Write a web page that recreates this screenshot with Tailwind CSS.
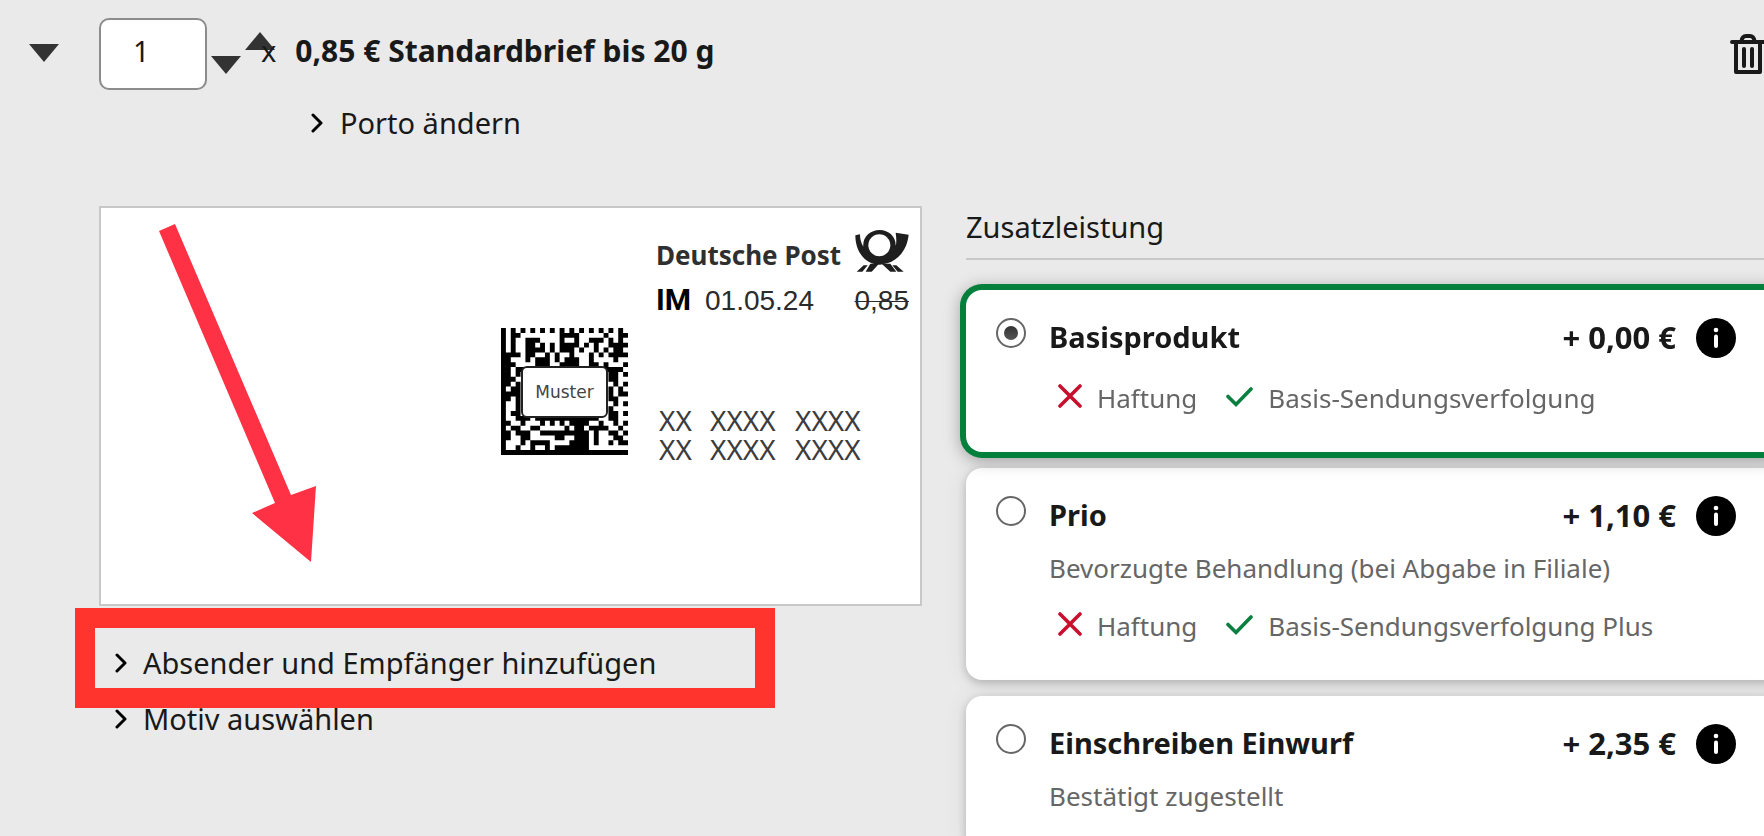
<!DOCTYPE html>
<html lang="de">
<head>
<meta charset="utf-8">
<meta name="viewport" content="width=device-width, initial-scale=1">
<title>Standardbrief – Zusatzleistung</title>
<script src="https://cdn.jsdelivr.net/npm/@tailwindcss/browser@4"></script>
</head>
<body class="min-h-screen overflow-hidden bg-[#eaeaea] font-['Noto_Sans','Open_Sans',sans-serif] text-[29px] text-[#191919]">
<svg class="hidden" aria-hidden="true">
  <symbol id="chevron" viewBox="0 0 12 20"><path d="M2 2l8 8-8 8" fill="none" stroke="#000" stroke-width="3" stroke-linecap="round" stroke-linejoin="round"/></symbol>
  <symbol id="tri-down" viewBox="0 0 30 18"><path d="M0 0h30L15 18z" fill="#333"/></symbol>
  <symbol id="tri-up" viewBox="0 0 30 18"><path d="M0 18h30L15 0z" fill="#333"/></symbol>
  <symbol id="cross" viewBox="0 0 24 24"><path d="M2 2l20 20m0-20l-20 20" fill="none" stroke="#c8102e" stroke-width="3.600" stroke-linecap="round"/></symbol>
  <symbol id="check" viewBox="0 0 27 24"><path d="M2 12.500l8 8L25 5" fill="none" stroke="#0b7f40" stroke-width="3.600" stroke-linecap="round" stroke-linejoin="miter"/></symbol>
  <symbol id="info" viewBox="0 0 40 40"><circle cx="20" cy="20" r="20" fill="#000"/><circle cx="20" cy="12" r="2.300" fill="#fff"/><path d="M20 18.500v9.500" stroke="#fff" stroke-width="4" stroke-linecap="round"/></symbol>
</svg>

<main class="-mr-[22px] pt-[18px]">
  <header class="flex items-start pr-5 pl-[29px]">
    <button type="button" aria-label="Position einklappen" class="mt-[26px]"><svg class="h-[18px] w-[30px]"><use href="#tri-down"/></svg></button>
    <input type="text" inputmode="numeric" value="1" aria-label="Anzahl" class="ml-10 h-[72px] w-[108px] rounded-[10px] border-2 border-[#8c8c8c] bg-white pb-2 pl-8">
    <button type="button" aria-label="Anzahl verringern" class="mt-[38px] ml-1"><svg class="h-[18px] w-[30px]"><use href="#tri-down"/></svg></button>
    <button type="button" aria-label="Anzahl erhöhen" class="mt-[14px] ml-1"><svg class="h-[18px] w-[30px]"><use href="#tri-up"/></svg></button>
    <span class="-ml-[14px] leading-[66px]">x</span>
    <h1 class="ml-[19px] text-[30px] leading-[66px] font-bold">0,85 € Standardbrief bis 20 g</h1>
    <button type="button" aria-label="Position löschen" class="mt-4 ml-auto">
      <svg class="h-10 w-9" viewBox="0 0 36 40" fill="none" stroke="#191919" stroke-width="4" stroke-linecap="round" stroke-linejoin="round"><path d="M2 8h32M6 8v30h24V8M11.500 7c.5-3 2-5 4.500-5h4c2.500 0 4 2 4.500 5M14 15v17M22 15v17"/></svg>
    </button>
  </header>
  <div class="mt-[13px] flex pl-[311px]">
    <a href="#porto" class="flex items-center gap-[17px] leading-10"><svg class="h-5 w-3"><use href="#chevron"/></svg>Porto ändern</a>
  </div>

  <div class="mt-[63px] grid grid-cols-[823fr_820fr] gap-11 pl-[99px]">
    <section aria-label="Briefvorschau">
      <div class="relative flex h-[400px] justify-end gap-7 border-2 border-[#c8c8c8] bg-white pr-[11px]">
        <div class="mt-[120px] grid size-[127px] place-items-center">
          <svg class="col-start-1 row-start-1 size-[127px]" viewBox="0 0 26 26" aria-hidden="true"><path id="matrix" fill="#000"/></svg>
          <span class="col-start-1 row-start-1 rounded-md border-2 border-[#222] bg-white px-3 py-[11px] font-['DejaVu_Sans',sans-serif] text-[17px] leading-[26px] text-[#444]">Muster</span>
        </div>
        <div class="w-[253px] pt-[22px]">
          <div class="flex items-start justify-between">
            <span class="pt-[7px] text-[26px] leading-9 font-bold text-[#2f2f2f]">Deutsche Post</span>
            <svg class="h-[42px] w-[54px]" viewBox="0 0 162 126" role="img" aria-label="Posthorn">
              <path fill="#1e1e1e" d="M1 16l14-3c0 14 3 26 10 37C22 22 45 0 74 0c28 0 50 21 48 49 3-12 2-26 0-41l39 6c-4 39-25 73-64 86l-22 4C31 104 1 66 1 16z"/>
              <circle cx="73" cy="46" r="33" fill="#fff"/>
              <path fill="#1e1e1e" d="M26 106h12l-16 19H5zM46 101h26l-22 24H32zM80 101h26l18 24h-18zM112 106h12l22 19h-18z"/>
            </svg>
          </div>
          <div class="mt-1.5 flex items-baseline font-['Liberation_Sans',Arial,sans-serif] text-[28px] leading-[42px] text-[#2b2b2b]">
            <b class="w-[49px] font-['Roboto',sans-serif] text-[30px] text-black">IM</b>
            <span>01.05.24</span>
            <s class="ml-auto decoration-1">0,85</s>
          </div>
          <div class="mt-[84px] flex gap-[17px] pl-[3px] text-[28px] leading-[29px] text-[#3c3c3c]">
            <p class="w-[34px]">XX<br>XX</p>
            <p class="w-[68px]">XXXX<br>XXXX</p>
            <p class="w-[68px]">XXXX<br>XXXX</p>
          </div>
        </div>
        <svg class="pointer-events-none absolute top-[16px] left-[58px] h-[338px] w-[157px]" viewBox="0 0 157 338" aria-hidden="true"><path fill="#ff3144" d="M0 7L16 0l116 271 25-9-5 76-59-49 23-10z"/></svg>
      </div>
      <nav class="relative mt-[29px] flex flex-col items-start pl-4 leading-[56px]" aria-label="Brief gestalten">
        <a href="#adresse" class="flex items-center gap-4"><svg class="h-5 w-3"><use href="#chevron"/></svg>Absender und Empfänger hinzufügen</a>
        <a href="#motiv" class="flex items-center gap-4"><svg class="h-5 w-3"><use href="#chevron"/></svg>Motiv auswählen</a>
        <span class="pointer-events-none absolute -top-[27px] -left-6 h-[100px] w-[700px] border-[20px] border-[#ff342d]" aria-hidden="true"></span>
      </nav>
    </section>

    <fieldset class="min-w-0">
      <legend class="mb-[30px] w-full border-b-2 border-[#c8c8c8] pb-[11px] leading-[41px]">Zusatzleistung</legend>
      <div class="flex flex-col gap-4">
        <label class="block rounded-2xl bg-white pt-7 pr-[50px] pb-[35px] pl-[30px] ring-6 ring-[#047f3c] drop-shadow-[0_3px_8px_rgba(0,0,0,0.3)]">
          <span class="flex items-start">
            <input type="radio" name="service" checked class="size-[30px] shrink-0 appearance-none rounded-full border-2 border-[#666] bg-white p-1.5 before:block before:size-[14px] before:rounded-full checked:before:bg-linear-to-b checked:before:from-[#333] checked:before:to-[#555]">
            <b class="ml-[23px] leading-[38px]">Basisprodukt</b>
            <b class="mr-[20px] ml-auto text-[31px] leading-[38px]">+ 0,00 €</b>
            <button type="button" aria-label="Info zu Basisprodukt"><svg class="size-10"><use href="#info"/></svg></button>
          </span>
          <span class="mt-[21px] flex items-start gap-[15px] pl-[62px] text-[26px] leading-[38px] text-[#666]">
            <svg class="mt-[5px] size-6 shrink-0"><use href="#cross"/></svg><span class="mr-[14px]">Haftung</span>
            <svg class="mt-[5px] h-6 w-[27px] shrink-0"><use href="#check"/></svg><span>Basis-Sendungsverfolgung</span>
          </span>
        </label>
        <label class="block rounded-2xl bg-white pt-7 pr-[50px] pb-[35px] pl-[30px] shadow-[0_3px_8px_rgba(0,0,0,0.2),0_0_24px_rgba(0,0,0,0.08)]">
          <span class="flex items-start">
            <input type="radio" name="service" class="size-[30px] shrink-0 appearance-none rounded-full border-2 border-[#666] bg-white p-1.5 before:block before:size-[14px] before:rounded-full checked:before:bg-linear-to-b checked:before:from-[#333] checked:before:to-[#555]">
            <b class="ml-[23px] leading-[38px]">Prio</b>
            <b class="mr-[20px] ml-auto text-[31px] leading-[38px]">+ 1,10 €</b>
            <button type="button" aria-label="Info zu Prio"><svg class="size-10"><use href="#info"/></svg></button>
          </span>
          <span class="mt-[13px] block pl-[53px] text-[26px] leading-[38px] text-[#666]">Bevorzugte Behandlung (bei Abgabe in Filiale)</span>
          <span class="mt-5 flex items-start gap-[15px] pl-[62px] text-[26px] leading-[38px] text-[#666]">
            <svg class="mt-[5px] size-6 shrink-0"><use href="#cross"/></svg><span class="mr-[14px]">Haftung</span>
            <svg class="mt-[5px] h-6 w-[27px] shrink-0"><use href="#check"/></svg><span>Basis-Sendungsverfolgung Plus</span>
          </span>
        </label>
        <label class="block rounded-2xl bg-white pt-7 pr-[50px] pb-[35px] pl-[30px] shadow-[0_3px_8px_rgba(0,0,0,0.2),0_0_24px_rgba(0,0,0,0.08)]">
          <span class="flex items-start">
            <input type="radio" name="service" class="size-[30px] shrink-0 appearance-none rounded-full border-2 border-[#666] bg-white p-1.5 before:block before:size-[14px] before:rounded-full checked:before:bg-linear-to-b checked:before:from-[#333] checked:before:to-[#555]">
            <b class="ml-[23px] leading-[38px]">Einschreiben Einwurf</b>
            <b class="mr-[20px] ml-auto text-[31px] leading-[38px]">+ 2,35 €</b>
            <button type="button" aria-label="Info zu Einschreiben Einwurf"><svg class="size-10"><use href="#info"/></svg></button>
          </span>
          <span class="mt-[13px] block pl-[53px] text-[26px] leading-[38px] text-[#666]">Bestätigt zugestellt</span>
        </label>
      </div>
    </fieldset>
  </div>
</main>
<script>
// Data matrix of the sample stamp, one string per row of modules
const rows = [
  '#.#.#.#.#.#.#.#.#.#.#.#.#.',
  '#.##........####.....#..##',
  '#.#..###....#..#..###.#.#.',
  '#.#..##.#.#.####.#.#..####',
  '#.#..####.#.###.#..#.#.##.',
  '####.##..#.#..#...#.#.####',
  '##...#.###.#.###..#....#..',
  '###....###..####..##.#...#',
  '##.######################.',
  '##.#..................##.#',
  '###...................##..',
  '##.#...................#.#',
  '#.##..................#.#.',
  '####..................#.##',
  '##.#..................##..',
  '#..#...................#.#',
  '#..#..................#...',
  '#.##..................##.#',
  '#..###.#############..##..',
  '##..#...#.#.#.####..#..#.#',
  '#.##..##.....#.##.####..#.',
  '##.###..##########.#..##.#',
  '##..##.....##..###.#...##.',
  '#...#.####....####.#..#.##',
  '#..#..#..#.#######........',
  '##########################'
];
document.getElementById('matrix').setAttribute('d',
  rows.map((row, y) => [...row].map((c, x) => c === '#' ? `M${x} ${y}h1v1h-1z` : '').join('')).join(''));
</script>
</body>
</html>
